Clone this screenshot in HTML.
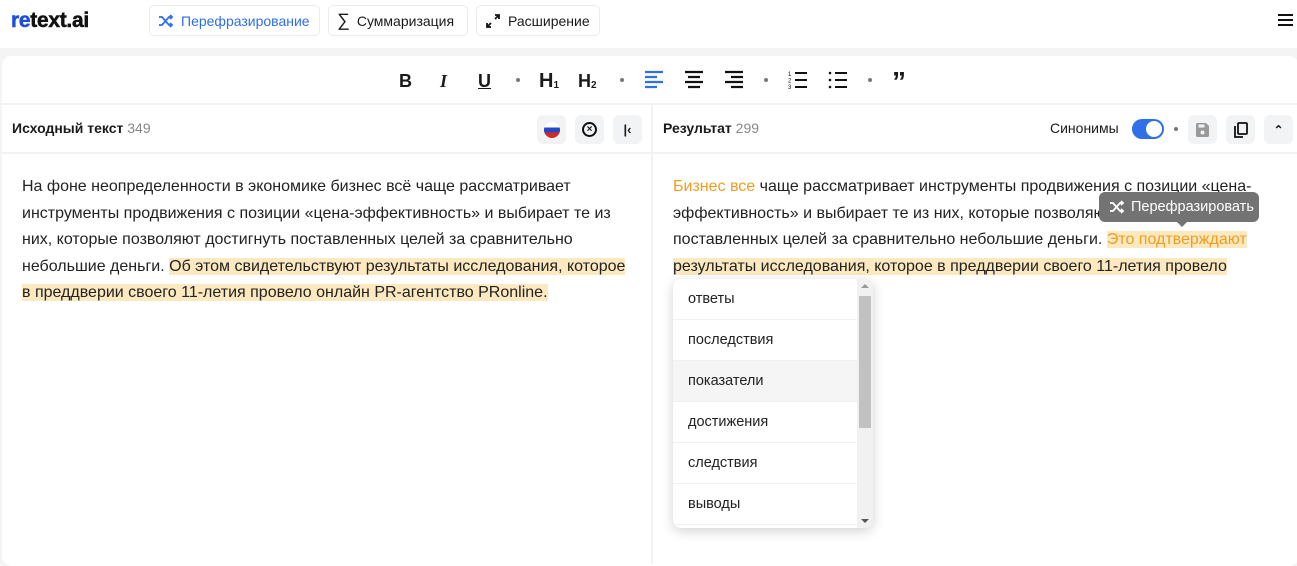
<!DOCTYPE html>
<html><head><meta charset="utf-8"><style>
*{box-sizing:border-box;margin:0;padding:0}
body{width:1297px;height:561px;overflow:hidden;background:#f4f4f5;font-family:"Liberation Sans",sans-serif;color:#1a1a1a;position:relative}
.top{position:absolute;left:0;top:0;width:1297px;height:48px;background:#fff}
.logo{position:absolute;left:11px;top:9px;font-weight:bold;font-size:21px;letter-spacing:-0.3px;color:#111;-webkit-text-stroke:0.5px #111}
.logo span{color:#1f4fd8;-webkit-text-stroke:0.5px #1f4fd8}
.tab{position:absolute;top:5px;height:31px;border:1px solid #ececec;border-radius:5px;font-size:14px;display:flex;align-items:center;padding:0 8px;gap:7px;background:#fff}
.card{position:absolute;left:2px;top:56px;width:1297px;height:510px;background:#fff;border-radius:10px}
.tb{position:absolute;top:70px;height:22px;display:flex;align-items:center}
.dot{position:absolute;width:4px;height:4px;border-radius:2px;background:#777;top:78px}
.hline{position:absolute;left:2px;width:1295px;height:2px;background:#f2f2f2}
.vline{position:absolute;left:651px;top:104px;width:2px;height:460px;background:#f2f2f2}
.ph{position:absolute;top:120px;font-size:14px;font-weight:bold}
.ph span{font-weight:normal;color:#888}
.btn{position:absolute;top:115px;width:29px;height:29px;border-radius:6px;background:#f2f3f5;display:flex;align-items:center;justify-content:center}
.txt{position:absolute;font-size:16px;line-height:26.5px;color:#222}
.hl{background:#fce9c0}
.or{color:#f29c1f}
.tip{position:absolute;left:1099px;top:192px;width:160px;height:30px;background:#737373;border-radius:6px;color:#fff;font-size:14.5px;display:flex;align-items:center;padding-left:10px;gap:6px}
.tip:after{content:"";position:absolute;left:78px;bottom:-5px;border:5px solid transparent;border-top-color:#737373;border-bottom:0}
.dd{position:absolute;left:673px;top:279px;width:200px;height:249px;background:#fff;border-radius:8px;box-shadow:0 3px 12px rgba(0,0,0,.18);overflow:hidden}
.it{height:41px;border-bottom:1px solid #f0f0f0;font-size:14.5px;padding:12px 0 0 15px;width:184px;color:#222}
.sb{position:absolute;right:0;top:0;width:16px;height:249px;background:#f1f1f1}
</style></head><body>
<div class="top"></div>
<div class="logo"><span>re</span>text.ai</div>
<div class="tab" style="left:149px;width:171px;color:#2f6fe8"><svg width="16" height="14" viewBox="0 0 16 14" fill="none" stroke="#2f6fe8" stroke-width="1.8"><path d="M1 3h3l7 8h3M1 11h3l7-8h3M12 1l2 2-2 2M12 9l2 2-2 2"/></svg>Перефразирование</div>
<div class="tab" style="left:328px;width:140px"><span style="font-size:18px">∑</span>Суммаризация</div>
<div class="tab" style="left:476px;width:124px"><svg width="16" height="16" viewBox="0 0 16 16" fill="none" stroke="#111" stroke-width="1.8"><path d="M10 2h4v4M14 2l-4 4M6 14H2v-4M2 14l4-4"/></svg>Расширение</div>
<div style="position:absolute;left:1278px;top:14px;width:15px;height:2px;background:#111;box-shadow:0 5px 0 #111,0 10px 0 #111"></div>
<div class="card"></div>
<div class="tb" style="left:399px;font-weight:bold;font-size:18px">B</div>
<div class="tb" style="left:440px;font-weight:bold;font-style:italic;font-size:18px;font-family:'Liberation Serif',serif">I</div>
<div class="tb" style="left:478px;font-weight:bold;font-size:18px;text-decoration:underline">U</div>
<div class="dot" style="left:516px"></div>
<div class="tb" style="left:539px;font-weight:bold;font-size:20px">H<small style="font-size:10px;margin-top:8px">1</small></div>
<div class="tb" style="left:578px;font-weight:bold;font-size:18px">H<small style="font-size:10px;margin-top:8px">2</small></div>
<div class="dot" style="left:620px"></div>
<svg style="position:absolute;left:644px;top:70px" width="20" height="20" stroke="#2f6fe8" stroke-width="2.2"><path d="M1 2h18M1 7h12M1 12h18M1 17h12"/></svg>
<svg style="position:absolute;left:684px;top:70px" width="20" height="20" stroke="#111" stroke-width="2.2"><path d="M1 2h18M4 7h12M1 12h18M4 17h12"/></svg>
<svg style="position:absolute;left:724px;top:70px" width="20" height="20" stroke="#111" stroke-width="2.2"><path d="M1 2h18M7 7h12M1 12h18M7 17h12"/></svg>
<div class="dot" style="left:764px"></div>
<svg style="position:absolute;left:788px;top:70px" width="20" height="20" stroke="#111" stroke-width="2"><path d="M7 3h12M7 10h12M7 17h12"/><text x="0" y="6" font-size="6" stroke="none" fill="#111">1</text><text x="0" y="12.5" font-size="6" stroke="none" fill="#111">2</text><text x="0" y="19" font-size="6" stroke="none" fill="#111">3</text></svg>
<svg style="position:absolute;left:828px;top:70px" width="20" height="20" stroke="#111" stroke-width="2"><path d="M7 3h12M7 10h12M7 17h12"/><circle cx="2" cy="3" r="1.3" fill="#111" stroke="none"/><circle cx="2" cy="10" r="1.3" fill="#111" stroke="none"/><circle cx="2" cy="17" r="1.3" fill="#111" stroke="none"/></svg>
<div class="dot" style="left:868px"></div>
<div class="tb" style="left:892px;font-weight:bold;font-size:28px;top:67px;height:30px;letter-spacing:-2px">”</div>
<div class="hline" style="top:103px"></div>
<div class="hline" style="top:152px"></div>
<div class="vline"></div>
<div class="ph" style="left:12px">Исходный текст <span>349</span></div>
<div class="btn" style="left:537px"><div style="width:16px;height:16px;border-radius:8px;background:linear-gradient(#fff 0 33%,#2746c8 33% 66%,#d52b1e 66%)"></div></div>
<div class="btn" style="left:575px"><div style="width:15px;height:15px;border:2px solid #111;border-radius:8px;font-size:10px;line-height:11px;text-align:center;font-weight:bold">×</div></div>
<div class="btn" style="left:613px;font-size:13px;font-weight:bold">|‹</div>
<div class="ph" style="left:663px">Результат <span>299</span></div>
<div style="position:absolute;left:1050px;top:120px;font-size:14px">Синонимы</div>
<div style="position:absolute;left:1132px;top:119px;width:32px;height:20px;border-radius:10px;background:#2f6fe8"><div style="position:absolute;right:2px;top:2px;width:16px;height:16px;border-radius:8px;background:#fff"></div></div>
<div style="position:absolute;left:1174px;top:127px;width:4px;height:4px;border-radius:2px;background:#777"></div>
<div class="btn" style="left:1188px"><svg width="13" height="14" viewBox="0 0 13 14"><path d="M0 1.5A1.5 1.5 0 0 1 1.5 0H10l3 3v9.5A1.5 1.5 0 0 1 11.5 14h-10A1.5 1.5 0 0 1 0 12.5z" fill="#999"/><rect x="2.5" y="1.5" width="6" height="3" fill="#f2f3f5"/><circle cx="6.5" cy="9.5" r="2" fill="#f2f3f5"/></svg></div>
<div class="btn" style="left:1226px"><svg width="14" height="16" fill="none" stroke="#111" stroke-width="1.8"><rect x="4" y="1" width="9" height="11" rx="1"/><path d="M1 4v11h8"/></svg></div>
<div class="btn" style="left:1264px;font-size:12px;font-weight:bold">⌃</div>
<div class="txt" style="left:22px;top:174px;width:615px">На фоне неопределенности в экономике бизнес всё чаще рассматривает инструменты продвижения с позиции «цена-эффективность» и выбирает те из них, которые позволяют достигнуть поставленных целей за сравнительно небольшие деньги. <span class="hl">Об этом свидетельствуют результаты исследования, которое в преддверии своего 11-летия провело онлайн PR-агентство PRonline.</span></div>
<div class="txt" style="left:673px;top:174px;width:590px"><span class="or">Бизнес все</span> чаще рассматривает инструменты продвижения с позиции «цена-эффективность» и выбирает те из них, которые позволяют достигнуть поставленных целей за сравнительно небольшие деньги. <span class="hl"><span class="or">Это подтверждают</span> результаты исследования, которое в преддверии своего 11-летия провело <span style="letter-spacing:-1.2px">онлайн PR-агентство PRonline</span>.</span></div>
<div class="tip"><svg width="16" height="14" viewBox="0 0 16 14" fill="none" stroke="#fff" stroke-width="1.8"><path d="M1 3h3l7 8h3M1 11h3l7-8h3M12 1l2 2-2 2M12 9l2 2-2 2"/></svg>Перефразировать</div>
<div class="dd">
<div class="it">ответы</div><div class="it">последствия</div><div class="it" style="background:#f5f5f5">показатели</div><div class="it">достижения</div><div class="it">следствия</div><div class="it">выводы</div>
<div class="sb"><div style="position:absolute;left:2px;top:17px;width:12px;height:132px;background:#c1c1c1"></div><div style="position:absolute;left:4px;top:5px;border:4px solid transparent;border-bottom-color:#999;border-top:0"></div><div style="position:absolute;left:4px;bottom:5px;border:4px solid transparent;border-top-color:#555;border-bottom:0"></div></div>
</div>
</body></html>
